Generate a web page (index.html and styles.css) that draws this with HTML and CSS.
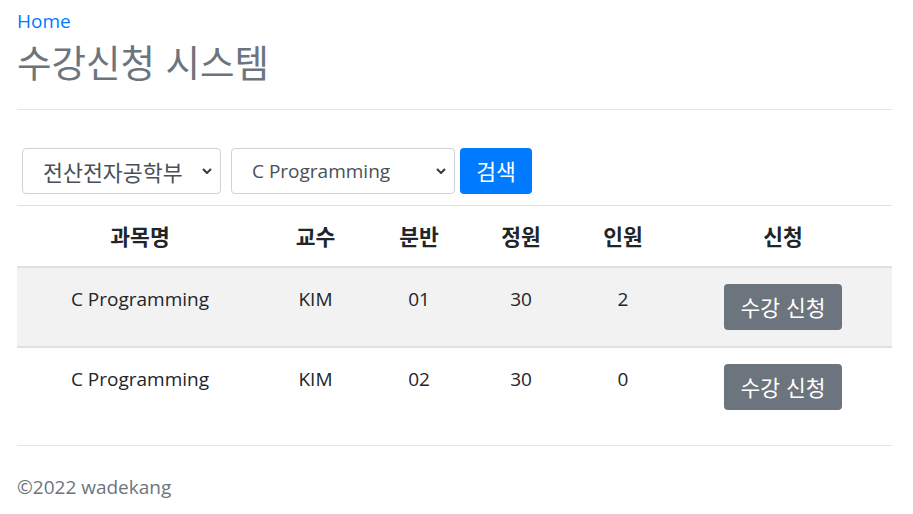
FILE: index.html
```html
<!DOCTYPE html>
<html lang="ko">
<head>
<meta charset="utf-8">
<title>수강신청 시스템</title>
<link rel="stylesheet" href="styles.css">
</head>
<body>
<div class="page">
  <header class="head">
    <a class="home" href="#">Home</a>
    <h1 class="title">수강신청 시스템</h1>
  </header>
  <hr class="rule">
  <form class="search">
    <select class="select select-dept">
      <option>전산전자공학부</option>
    </select>
    <select class="select select-course">
      <option>C Programming</option>
    </select>
    <button type="button" class="btn btn-primary">검색</button>
  </form>
  <table class="table">
    <colgroup>
      <col class="c1"><col class="c2"><col class="c3"><col class="c4"><col class="c5"><col class="c6">
    </colgroup>
    <thead>
      <tr><th>과목명</th><th>교수</th><th>분반</th><th>정원</th><th>인원</th><th>신청</th></tr>
    </thead>
    <tbody>
      <tr class="striped"><td>C Programming</td><td>KIM</td><td>01</td><td>30</td><td>2</td><td><button type="button" class="btn btn-secondary">수강 신청</button></td></tr>
      <tr><td>C Programming</td><td>KIM</td><td>02</td><td>30</td><td>0</td><td><button type="button" class="btn btn-secondary">수강 신청</button></td></tr>
    </tbody>
  </table>
  <hr class="rule rule-foot">
  <footer class="foot">©2022 wadekang</footer>
</div>
</body>
</html>
```

FILE: styles.css
```css
* { box-sizing: border-box; }
body {
  margin: 0;
  font-family: "Open Sans", "Noto Sans CJK KR", sans-serif;
  font-size: 19px;
  line-height: 30px;
  color: #212529;
  background: #fff;
}
.page {
  padding: 6px 21px 0 17px;
}
.home {
  display: block;
  color: #007bff;
  text-decoration: none;
  font-size: 19px;
  line-height: 30px;
}
.title {
  margin: 0;
  font-family: "Noto Sans CJK KR", sans-serif;
  font-size: 37.5px;
  font-weight: 400;
  line-height: 50px;
  color: #6c757d;
}
.rule {
  margin: 23px 0 0;
  border: 0;
  border-top: 1px solid #e5e5e5;
  height: 0;
}
.search {
  display: flex;
  align-items: stretch;
  margin-top: 38px;
  padding-left: 5px;
}
.select {
  -webkit-appearance: none;
  appearance: none;
  height: 46px;
  margin-right: 10px;
  border: 1px solid #ced4da;
  border-radius: 4px;
  background-color: #fff;
  background-image: url("data:image/svg+xml,%3Csvg xmlns='http://www.w3.org/2000/svg' width='10' height='6' viewBox='0 0 10 6'%3E%3Cpath d='M1 1l4 4 4-4' fill='none' stroke='%23343a40' stroke-width='2'/%3E%3C/svg%3E");
  background-repeat: no-repeat;
  background-position: right 8px center;
  background-size: 10px 6px;
  font-family: inherit;
  font-size: 19px;
  color: #495057;
  padding: 0 24px 0 20px;
}
.select-dept {
  width: 199px;
  font-family: "Noto Sans CJK KR", sans-serif;
  font-size: 21.7px;
}
.select-course { width: 224px; margin-right: 5px; }
.btn {
  display: inline-block;
  vertical-align: top;
  border: 0;
  border-radius: 4px;
  font-family: "Noto Sans CJK KR", sans-serif;
  font-size: 21.5px;
  line-height: 30px;
  color: #fff;
  cursor: pointer;
}
.btn-primary {
  background: #007bff;
  width: 72px;
  height: 46px;
  padding: 0;
}
.btn-secondary {
  background: #6c757d;
  width: 118px;
  height: 46px;
  padding: 0;
}
.table {
  width: 100%;
  margin-top: 11px;
  border-collapse: collapse;
  table-layout: fixed;
  border-top: 1px solid #dee2e6;
}
.c1 { width: 246px; }
.c2 { width: 105px; }
.c3 { width: 102px; }
.c4 { width: 102px; }
.c5 { width: 102px; }
.c6 { width: 218px; }
.table th {
  padding: 15px 0;
  font-family: "Noto Sans CJK KR", sans-serif;
  font-size: 21.5px;
  line-height: 30px;
  font-weight: 700;
  text-align: center;
  vertical-align: bottom;
  border-bottom: 2px solid #dee2e6;
}
.table td {
  padding: 16px 0;
  line-height: 30px;
  text-align: center;
  vertical-align: top;
}
.table tbody tr + tr td {
  border-top: 2px solid #dee2e6;
}
.striped td { background: #f2f2f2; }
.rule-foot { margin-top: 19px; }
.foot {
  margin-top: 26px;
  color: #6c757d;
  font-size: 19px;
  line-height: 30px;
  padding-bottom: 12px;
}
```
